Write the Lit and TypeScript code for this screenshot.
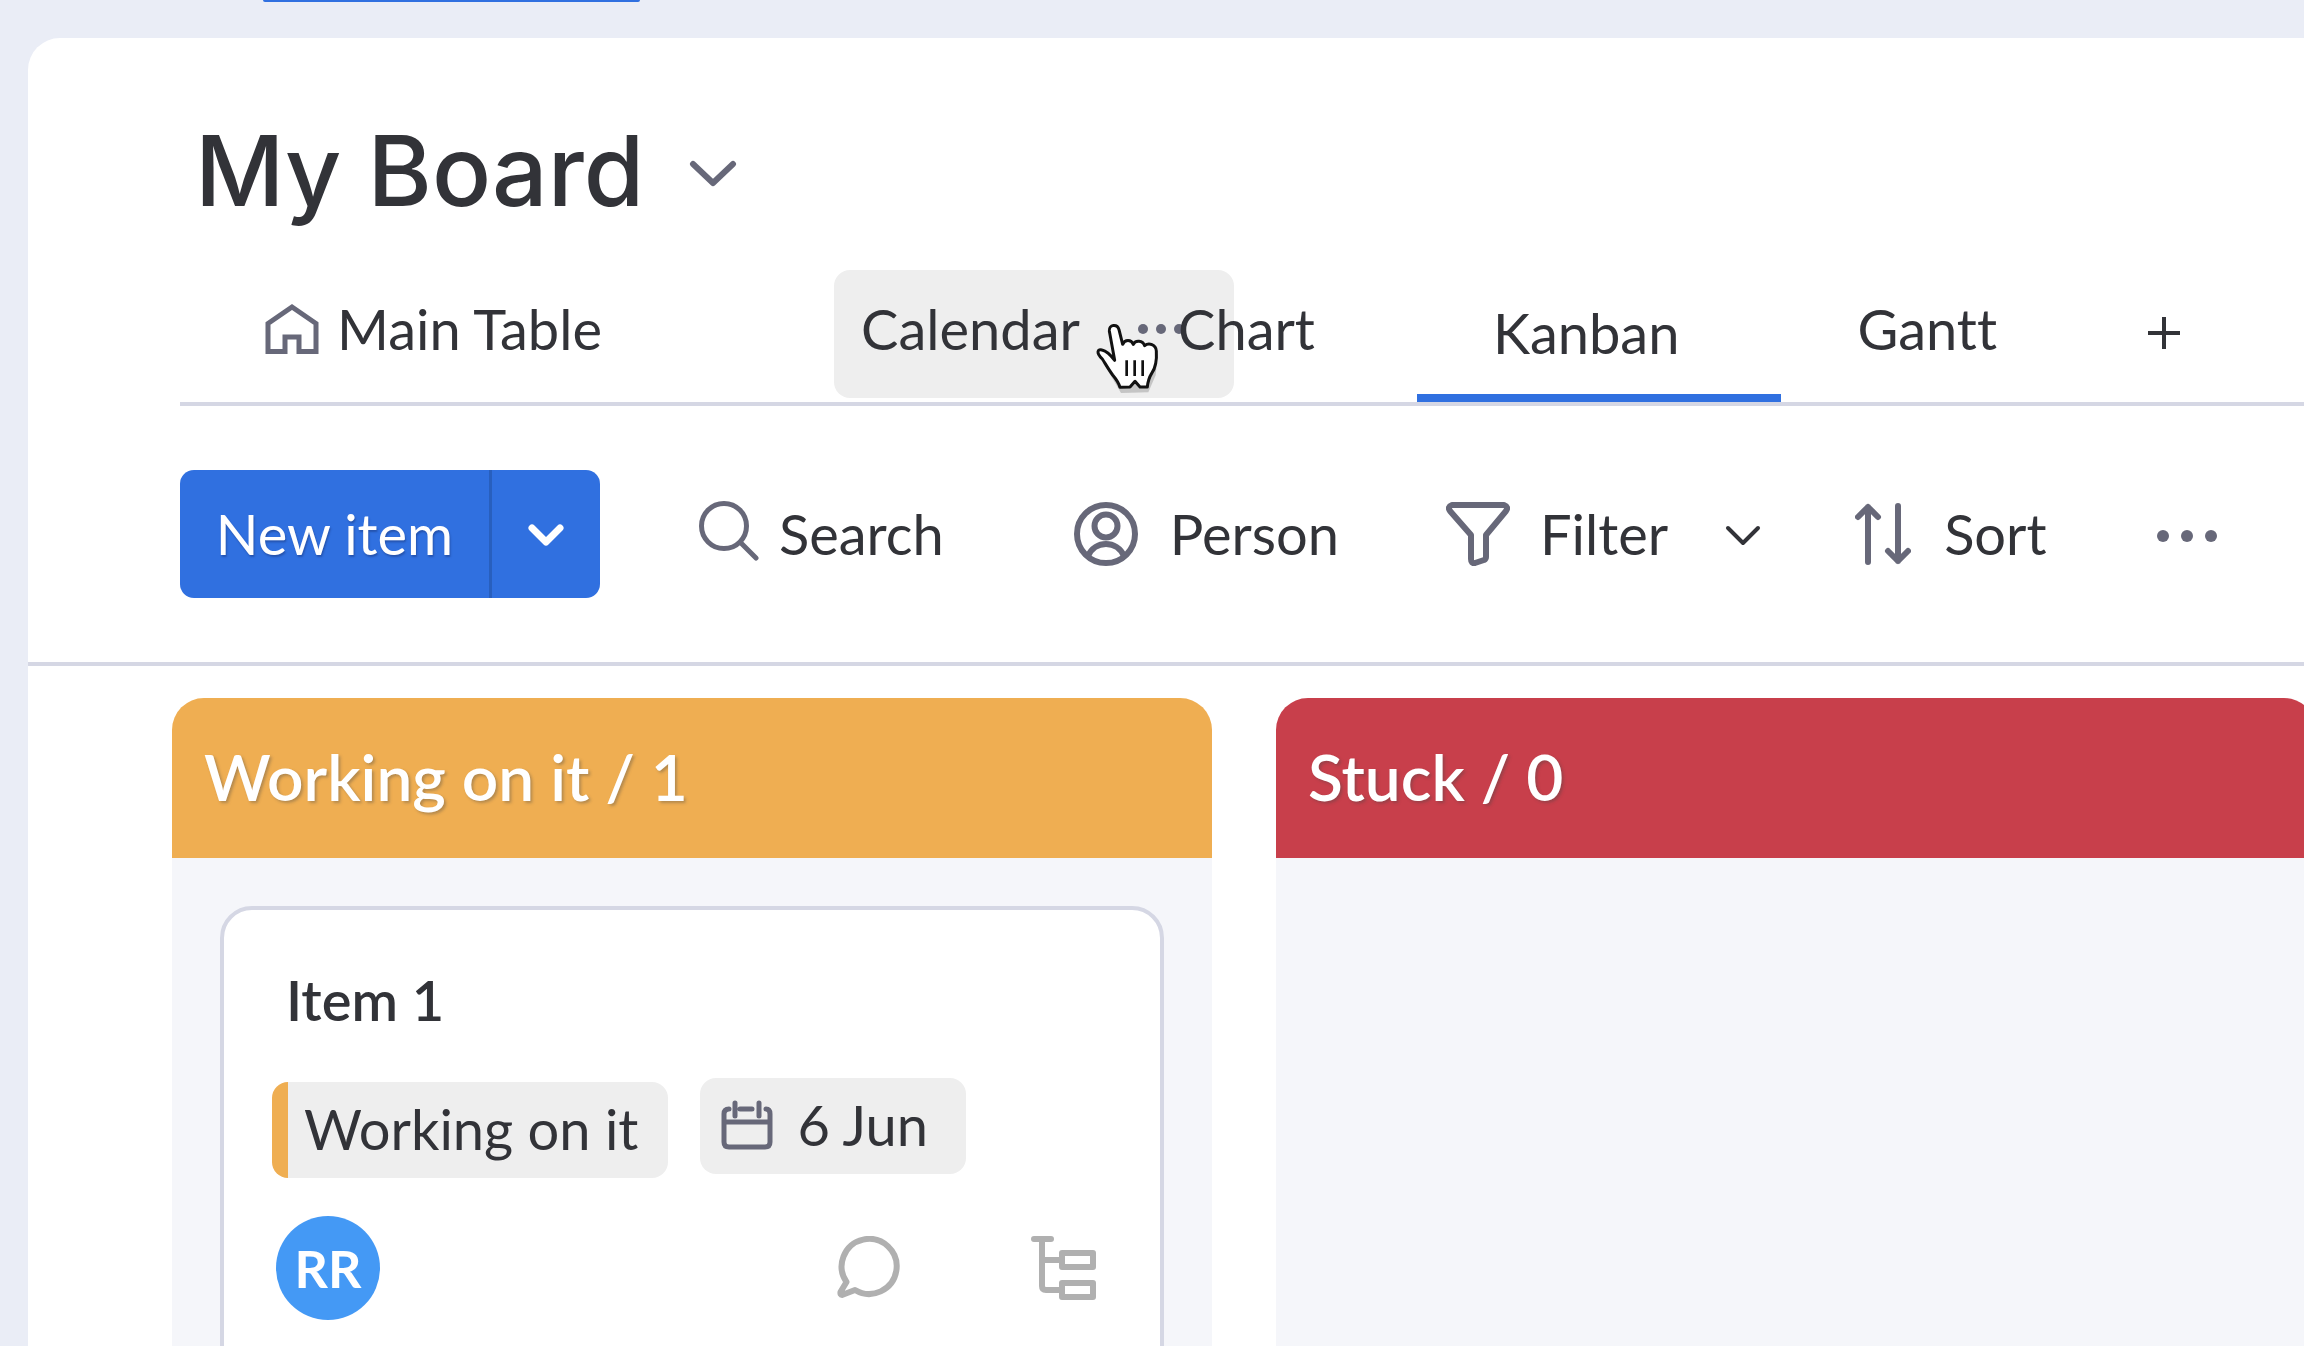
import { LitElement, html, css, svg } from "lit";
import { customElement, property, state } from "lit/decorators.js";
import { classMap } from "lit/directives/class-map.js";

const line = (size: number[], body: unknown, width = 5) => html`<svg
  class="icon"
  width=${size[0]}
  height=${size[1]}
  viewBox="0 0 ${size[0]} ${size[1]}"
  fill="none"
  stroke="currentColor"
  stroke-width=${width}
  stroke-linecap="round"
  stroke-linejoin="round"
  aria-hidden="true"
>${body}</svg>`;

const icons = {
  chevronLarge: line([48, 30], svg`<path d="M4 5 L24 24 L44 5"/>`, 6),
  chevron: line([36, 22], svg`<path d="M3 3 L18 18 L33 3"/>`, 4),
  chevronBold: line([38, 26], svg`<path d="M5 5 L19 19 L33 5"/>`, 7),
  home: line(
    [54, 52],
    svg`<path stroke-linejoin="miter" stroke-linecap="butt" d="M3 48.5 V20.5 L27 4 L51 20.5 V48.5 H34 V34 H20 V48.5 Z"/>`,
    5
  ),
  search: line([60, 66], svg`<circle cx="25" cy="25" r="22.5"/><path d="M42 42 L57 57"/>`, 5),
  person: line(
    [64, 64],
    svg`<circle cx="32" cy="32" r="29"/><circle cx="32" cy="24" r="11.5"/><path d="M14 54 C21 38 43 38 50 54"/>`,
    6
  ),
  filter: line(
    [64, 64],
    svg`<path d="M6 3 H58 Q63 5 60 9 L40 33 V55 Q40 57 38 58 L29 61 Q25 62 25 57 V33 L4 9 Q1 5 6 3 Z"/>`,
    6
  ),
  sort: line(
    [56, 62],
    svg`<path d="M13 59 V4 M3 14 L13 4 L23 14 M43 3 V58 M33 48 L43 58 L53 48"/>`,
    6
  ),
  plus: line([32, 32], svg`<path stroke-linecap="butt" d="M16 0 V32 M0 16 H32"/>`, 4),
  calendar: line(
    [52, 50],
    svg`<path stroke-linejoin="miter" d="M8 9 Q3 9 3 14 V42 Q3 47 8 47 H44 Q49 47 49 42 V14 Q49 9 45 9 M19 9 H31 M3 22 H49 M14 3 V16 M38 3 V16"/>`,
    5
  ),
  bubble: line(
    [64, 64],
    svg`<path d="M9.500 46 A27.500 27.500 0 1 1 18 54 L5 59 Q3 59 3.500 56 Z"/>`,
    6
  ),
  tree: line(
    [66, 64],
    svg`<path d="M3 3 H20 M11 3 V50 Q11 54 15 54 H30 M11 24 H30"/><rect x="31" y="17" width="31" height="14"/><rect x="31" y="47" width="31" height="14"/>`,
    6
  ),
};

const dots = (radius: number, step: number) => html`<svg
  class="icon"
  width=${step * 2 + radius * 2}
  height=${radius * 2}
  fill="currentColor"
  aria-hidden="true"
>${[0, 1, 2].map(
    (n) => svg`<circle cx=${radius + n * step} cy=${radius} r=${radius}></circle>`
  )}</svg>`;

interface Item {
  title: string;
  status: string;
  date: string;
  owner: string;
}

@customElement("board-card")
export class BoardCard extends LitElement {
  @property({ attribute: false }) item!: Item;

  static styles = css`
    :host {
      display: block;
      box-sizing: border-box;
      min-height: 560px;
      padding: 58px 63px 56px 48px;
      border: 4px solid #d5d7e4;
      border-radius: 32px;
      background: #fff;
    }
    .icon {
      display: block;
      flex: none;
    }
    .title {
      margin: 0 0 46px 14px;
      font-size: 56px;
      line-height: 64px;
      font-weight: 600;
    }
    .chips {
      display: flex;
      align-items: flex-start;
      gap: 32px;
    }
    .chip {
      display: flex;
      align-items: center;
      box-sizing: border-box;
      height: 96px;
      padding: 0 30px 2px 16px;
      border-radius: 16px;
      background: #eee;
      font-size: 56px;
      line-height: 64px;
      white-space: nowrap;
    }
    .status {
      margin-top: 4px;
      border-left: 16px solid #efae52;
    }
    .date {
      gap: 24px;
      padding-right: 38px;
      padding-left: 21px;
    }
    .date .icon {
      color: #676879;
    }
    .footer {
      display: flex;
      align-items: center;
      margin-top: 38px;
      padding-left: 4px;
      color: #b0b0b0;
    }
    .avatar {
      display: grid;
      place-items: center;
      width: 104px;
      height: 104px;
      margin-right: auto;
      border-radius: 50%;
      background: #4499f5;
      color: #fff;
      font-size: 52px;
      font-weight: 700;
    }
    .action {
      padding: 0;
      border: 0;
      background: none;
      color: inherit;
    }
    .action + .action {
      margin-left: 130px;
    }
  `;

  render() {
    const { title, status, date, owner } = this.item;
    return html`
      <h3 class="title">${title}</h3>
      <div class="chips">
        <span class="chip status">${status}</span>
        <span class="chip date">${icons.calendar}${date}</span>
      </div>
      <div class="footer">
        <span class="avatar">${owner}</span>
        <button class="action" aria-label="Comments">${icons.bubble}</button>
        <button class="action" aria-label="Subitems">${icons.tree}</button>
      </div>
    `;
  }
}

@customElement("board-column")
export class BoardColumn extends LitElement {
  @property() name = "";
  @property() tone = "";
  @property({ attribute: false }) items: Item[] = [];

  static styles = css`
    :host {
      display: flex;
      flex-direction: column;
      flex: none;
      width: 1040px;
    }
    .head {
      display: flex;
      flex: none;
      align-items: center;
      box-sizing: border-box;
      height: 160px;
      margin: 0;
      padding: 0 32px 2px;
      border-radius: 32px 32px 0 0;
      color: #fff;
      font-size: 64px;
      font-weight: 600;
      text-shadow: 2px 2px 3px rgba(70, 70, 70, 0.35);
    }
    .working {
      background: #efae52;
    }
    .stuck {
      background: #c83f4b;
    }
    .body {
      flex: 1;
      padding: 48px;
      background: #f5f6fa;
    }
  `;

  render() {
    return html`
      <h2 class="head ${this.tone}">${this.name} / ${this.items.length}</h2>
      <div class="body">
        ${this.items.map((item) => html`<board-card .item=${item}></board-card>`)}
      </div>
    `;
  }
}

@customElement("app-root")
export class AppRoot extends LitElement {
  @state() private current = "Kanban";

  static styles = css`
    :host {
      display: flex;
      flex-direction: column;
      height: 100vh;
      overflow: hidden;
      background: #eaedf6;
      color: #323338;
      font-family: Lato, "Liberation Sans", sans-serif;
      font-size: 56px;
      line-height: 64px;
      font-variant-ligatures: none;
    }
    button {
      display: flex;
      align-items: center;
      padding: 0;
      border: 0;
      background: none;
      color: inherit;
      font: inherit;
      font-variant-ligatures: none;
      white-space: nowrap;
    }
    .icon {
      display: block;
      flex: none;
    }
    .top {
      flex: none;
      height: 38px;
      padding-left: 263px;
    }
    .pill {
      width: 377px;
      height: 2px;
      border-radius: 0 0 8px 8px;
      background: #3070e0;
    }
    .panel {
      display: flex;
      flex-direction: column;
      flex: 1;
      min-height: 0;
      margin-left: 28px;
      border-top-left-radius: 32px;
      background: #fff;
    }
    .heading {
      display: flex;
      align-items: center;
      gap: 45px;
      padding: 73px 0 0 167px;
      color: #676879;
    }
    .heading h1 {
      margin: 0;
      color: #323338;
      font-family: Inter, Lato, sans-serif;
      font-size: 98px;
      line-height: 120px;
      font-weight: 500;
    }
    .heading button {
      padding-top: 6px;
    }
    .tabs {
      display: flex;
      height: 132px;
      margin: 39px 0 0 152px;
      border-bottom: 4px solid #d5d7e4;
    }
    .tab {
      box-sizing: border-box;
      height: 128px;
      padding: 0 102px 10px 76px;
      border-radius: 16px;
    }
    .tab.current {
      height: 132px;
      padding-top: 2px;
      padding-bottom: 0;
      border-bottom: 8px solid #3070e0;
      border-radius: 0;
    }
    .tab.main {
      gap: 18px;
      padding-left: 85px;
      padding-right: 0;
      margin-right: 232px;
    }
    .main .icon,
    .calendar .icon {
      color: #676879;
    }
    .tab.calendar {
      position: relative;
      justify-content: space-between;
      width: 400px;
      margin-right: -132px;
      padding: 0 50px 10px 27px;
      background: #eee;
    }
    .calendar .pointer {
      position: absolute;
      left: 261px;
      top: 52px;
    }
    .chart {
      position: relative;
    }
    .add {
      height: 128px;
      padding: 0 0 2px 49px;
    }
    .toolbar {
      display: flex;
      align-items: center;
      padding: 64px 0 64px 152px;
      border-bottom: 4px solid #d5d7e4;
    }
    .tool {
      height: 128px;
    }
    .tool .icon {
      color: #676879;
    }
    .new {
      display: flex;
      margin-right: 99px;
      border-radius: 14px;
      background: #3070e0;
      color: #fff;
    }
    .new button {
      height: 128px;
      justify-content: center;
      width: 309px;
      text-shadow: 1px 2px 2px rgba(20, 40, 100, 0.4);
    }
    .new .more {
      width: 111px;
      padding-top: 4px;
      border-left: 3px solid #285fbe;
    }
    .search {
      gap: 20px;
      margin-right: 130px;
    }
    .person {
      gap: 32px;
      margin-right: 107px;
    }
    .filter {
      gap: 30px;
    }
    .tool.expand {
      margin: 0 94px 0 57px;
      padding-top: 4px;
      box-sizing: border-box;
    }
    .tool.expand .icon {
      color: #323338;
    }
    .sort {
      gap: 33px;
      margin-right: 110px;
    }
    .overflow {
      padding-top: 4px;
      box-sizing: border-box;
    }
    .board {
      display: flex;
      flex: 1;
      gap: 64px;
      min-height: 0;
      overflow: hidden;
      padding: 32px 0 0 144px;
    }
  `;

  private tab(name: string, kind: string, before: unknown = "", after: unknown = "") {
    const current = this.current === name;
    return html`<button
      role="tab"
      aria-selected=${current}
      class=${classMap({ tab: true, [kind]: true, current })}
      @click=${() => (this.current = name)}
    >${before}<span>${name}</span>${after}</button>`;
  }

  private pointer = html`<svg
    class="pointer"
    width="66"
    height="72"
    viewBox="43 65 198 216"
    stroke="#111"
    stroke-linejoin="round"
    aria-hidden="true"
  >
    <path fill="#777" stroke="none" opacity=".35" transform="translate(3 10)" d="M64 176 L102 180 L126 130 L228 150 L222 215 L200 266 L118 268 Z"/>
    <path
      fill="#fff"
      stroke-width="9"
      d="M86 92 C84 72 110 70 115 88 L126 132 C132 117 152 117 158 132 C164 118 186 120 192 136 C204 126 226 132 227 152 C229 184 224 204 213 219 C206 230 202 240 200 260 L178 260 L163 243 L148 260 L118 261 C114 246 106 236 96 224 C84 208 74 190 65 176 C44 156 52 145 64 149 C78 152 90 164 102 180 Z"
    />
    <path fill="none" stroke-width="8" d="M138 180 V227 M162 180 V227 M186 180 V227"/>
  </svg>`;

  private columns = [
    {
      name: "Working on it",
      tone: "working",
      items: [{ title: "Item 1", status: "Working on it", date: "6 Jun", owner: "RR" }],
    },
    { name: "Stuck", tone: "stuck", items: [] as Item[] },
  ];

  render() {
    return html`
      <div class="top"><div class="pill"></div></div>
      <main class="panel">
        <div class="heading">
          <h1>My Board</h1>
          <button aria-label="Board menu">${icons.chevronLarge}</button>
        </div>
        <div class="tabs" role="tablist">
          ${this.tab("Main Table", "main", icons.home)}
          ${this.tab("Calendar", "calendar", "", html`${dots(5, 18)}${this.pointer}`)}
          ${this.tab("Chart", "chart")} ${this.tab("Kanban", "kanban")}
          ${this.tab("Gantt", "gantt")}
          <button class="add" aria-label="Add view">${icons.plus}</button>
        </div>
        <div class="toolbar">
          <div class="new">
            <button>New item</button>
            <button class="more" aria-label="More item types">${icons.chevronBold}</button>
          </div>
          <button class="tool search">${icons.search}Search</button>
          <button class="tool person">${icons.person}Person</button>
          <button class="tool filter">${icons.filter}Filter</button>
          <button class="tool expand" aria-label="Filter options">${icons.chevron}</button>
          <button class="tool sort">${icons.sort}Sort</button>
          <button class="tool overflow" aria-label="More">${dots(6, 24)}</button>
        </div>
        <div class="board">
          ${this.columns.map(
            (c) => html`<board-column .name=${c.name} .tone=${c.tone} .items=${c.items}></board-column>`
          )}
        </div>
      </main>
    `;
  }
}
